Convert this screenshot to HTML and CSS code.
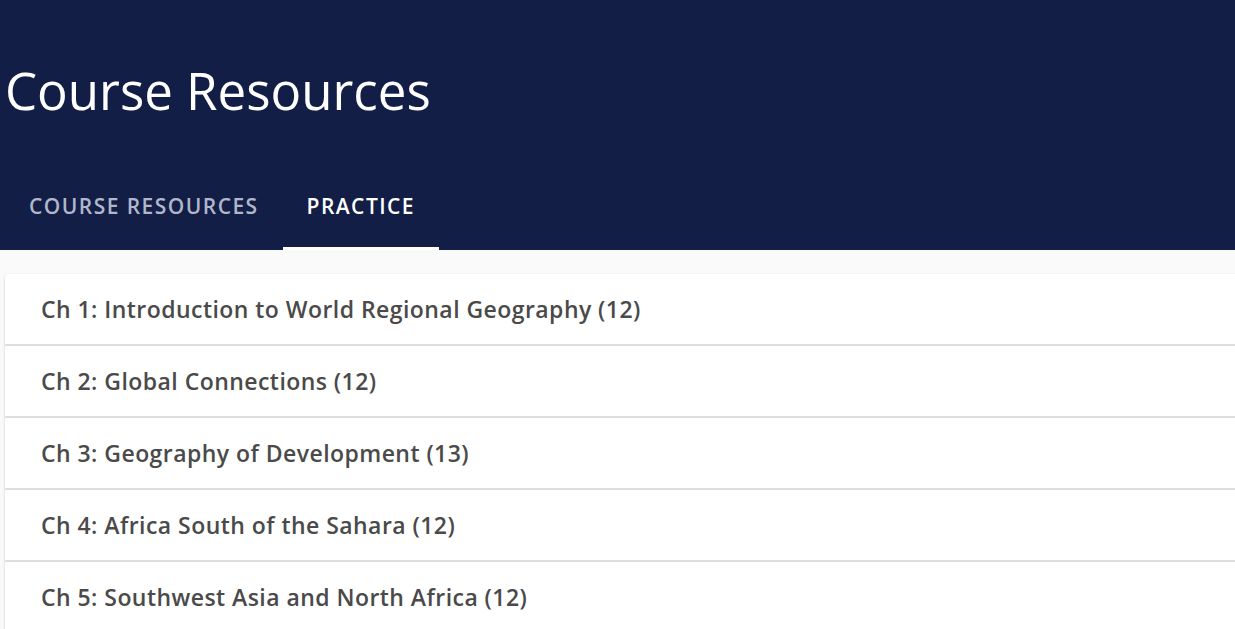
FILE: index.html
```html
<!DOCTYPE html>
<html lang="en">
<head>
<meta charset="utf-8">
<title>Course Resources</title>
<link rel="stylesheet" href="styles.css">
</head>
<body>
<header class="header">
  <h1 class="title">Course Resources</h1>
  <nav class="tabs">
    <a class="tab">COURSE RESOURCES</a>
    <a class="tab tab-active">PRACTICE</a>
  </nav>
</header>
<main class="content">
  <ul class="card">
    <li class="row">Ch 1: Introduction to World Regional Geography (12)</li>
    <li class="row">Ch 2: Global Connections (12)</li>
    <li class="row">Ch 3: Geography of Development (13)</li>
    <li class="row">Ch 4: Africa South of the Sahara (12)</li>
    <li class="row">Ch 5: Southwest Asia and North Africa (12)</li>
  </ul>
</main>
</body>
</html>
```
FILE: styles.css
```css
html, body {
  margin: 0;
  padding: 0;
  background: #fafafa;
  font-family: "Open Sans", "Noto Sans", sans-serif;
  overflow: hidden;
}
.header {
  background: #131e47;
  height: 250px;
  padding-left: 5px;
  box-sizing: border-box;
  display: flex;
  flex-direction: column;
}
.title {
  margin: 52px 0 0 0;
  font-size: 51px;
  line-height: 76px;
  font-weight: 400;
  color: #ffffff;
}
.tabs {
  margin-top: auto;
  display: flex;
}
.tab {
  display: block;
  height: 72px;
  box-sizing: border-box;
  padding: 13px 24px 0 24px;
  font-size: 21px;
  line-height: 30px;
  font-weight: 600;
  letter-spacing: 1.45px;
  color: #b1b7ca;
  border-bottom: 3px solid transparent;
}
.tab-active {
  color: #ffffff;
  border-bottom-color: #ffffff;
}
.content {
  padding: 24px 0 0 5px;
}
.card {
  list-style: none;
  margin: 0 -20px 0 0;
  padding: 0;
  background: #ffffff;
  border-radius: 4px;
  box-shadow: 0 1px 3px rgba(0, 0, 0, 0.18);
}
.row {
  height: 72px;
  box-sizing: border-box;
  display: flex;
  align-items: center;
  padding: 0 0 0 36px;
  border-bottom: 2px solid #dedede;
  font-size: 23px;
  font-weight: 600;
  letter-spacing: 0.45px;
  color: #4a4a4a;
}
```
